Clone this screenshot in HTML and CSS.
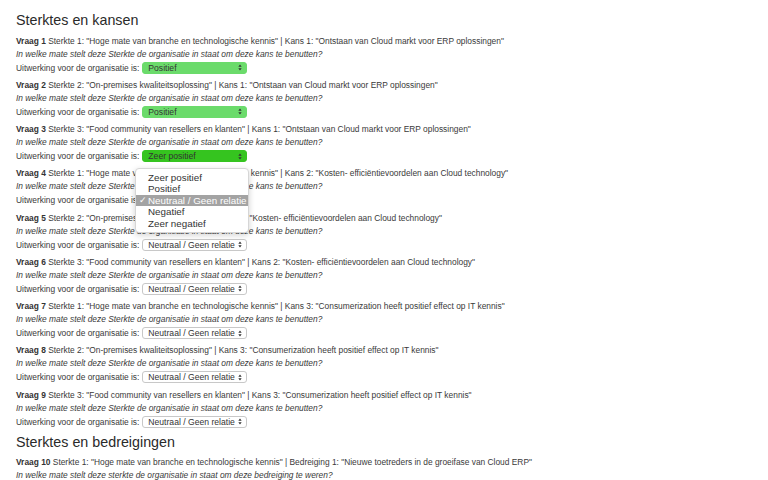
FILE: index.html
```html
<!DOCTYPE html>
<html lang="nl">
<head>
<meta charset="utf-8">
<title>Sterktes en kansen</title>
<link rel="stylesheet" href="styles.css">
</head>
<body>
<div class="page">
  <h2 class="section-title">Sterktes en kansen</h2>

  <div class="vraag">
    <div class="line"><b>Vraag 1</b> Sterkte 1: "Hoge mate van branche en technologische kennis" | Kans 1: "Ontstaan van Cloud markt voor ERP oplossingen"</div>
    <div class="line q">In welke mate stelt deze Sterkte de organisatie in staat om deze kans te benutten?</div>
    <div class="row"><span>Uitwerking voor de organisatie is:</span><div class="sel pos"><span>Positief</span><svg class="arr" viewBox="0 0 6 10"><path d="M3 0.5L5.5 4H0.5Z M3 9.5L5.5 6H0.5Z"/></svg></div></div>
  </div>

  <div class="vraag">
    <div class="line"><b>Vraag 2</b> Sterkte 2: "On-premises kwaliteitsoplossing" | Kans 1: "Ontstaan van Cloud markt voor ERP oplossingen"</div>
    <div class="line q">In welke mate stelt deze Sterkte de organisatie in staat om deze kans te benutten?</div>
    <div class="row"><span>Uitwerking voor de organisatie is:</span><div class="sel pos"><span>Positief</span><svg class="arr" viewBox="0 0 6 10"><path d="M3 0.5L5.5 4H0.5Z M3 9.5L5.5 6H0.5Z"/></svg></div></div>
  </div>

  <div class="vraag">
    <div class="line"><b>Vraag 3</b> Sterkte 3: "Food community van resellers en klanten" | Kans 1: "Ontstaan van Cloud markt voor ERP oplossingen"</div>
    <div class="line q">In welke mate stelt deze Sterkte de organisatie in staat om deze kans te benutten?</div>
    <div class="row"><span>Uitwerking voor de organisatie is:</span><div class="sel zpos"><span>Zeer positief</span><svg class="arr" viewBox="0 0 6 10"><path d="M3 0.5L5.5 4H0.5Z M3 9.5L5.5 6H0.5Z"/></svg></div></div>
  </div>

  <div class="vraag open">
    <div class="line"><b>Vraag 4</b> Sterkte 1: "Hoge mate van branche en technologische kennis" | Kans 2: "Kosten- efficiëntievoordelen aan Cloud technology"</div>
    <div class="line q">In welke mate stelt deze Sterkte de organisatie in staat om deze kans te benutten?</div>
    <div class="row"><span>Uitwerking voor de organisatie is:</span><div class="sel"><span>Neutraal / Geen relatie</span><svg class="arr" viewBox="0 0 6 10"><path d="M3 0.5L5.5 4H0.5Z M3 9.5L5.5 6H0.5Z"/></svg></div></div>
    <ul class="menu">
      <li>Zeer positief</li>
      <li>Positief</li>
      <li class="checked"><span class="check">✓</span>Neutraal / Geen relatie</li>
      <li>Negatief</li>
      <li>Zeer negatief</li>
    </ul>
  </div>

  <div class="vraag">
    <div class="line"><b>Vraag 5</b> Sterkte 2: "On-premises kwaliteitsoplossing" | Kans 2: "Kosten- efficiëntievoordelen aan Cloud technology"</div>
    <div class="line q">In welke mate stelt deze Sterkte de organisatie in staat om deze kans te benutten?</div>
    <div class="row"><span>Uitwerking voor de organisatie is:</span><div class="sel"><span>Neutraal / Geen relatie</span><svg class="arr" viewBox="0 0 6 10"><path d="M3 0.5L5.5 4H0.5Z M3 9.5L5.5 6H0.5Z"/></svg></div></div>
  </div>

  <div class="vraag">
    <div class="line"><b>Vraag 6</b> Sterkte 3: "Food community van resellers en klanten" | Kans 2: "Kosten- efficiëntievoordelen aan Cloud technology"</div>
    <div class="line q">In welke mate stelt deze Sterkte de organisatie in staat om deze kans te benutten?</div>
    <div class="row"><span>Uitwerking voor de organisatie is:</span><div class="sel"><span>Neutraal / Geen relatie</span><svg class="arr" viewBox="0 0 6 10"><path d="M3 0.5L5.5 4H0.5Z M3 9.5L5.5 6H0.5Z"/></svg></div></div>
  </div>

  <div class="vraag">
    <div class="line"><b>Vraag 7</b> Sterkte 1: "Hoge mate van branche en technologische kennis" | Kans 3: "Consumerization heeft positief effect op IT kennis"</div>
    <div class="line q">In welke mate stelt deze Sterkte de organisatie in staat om deze kans te benutten?</div>
    <div class="row"><span>Uitwerking voor de organisatie is:</span><div class="sel"><span>Neutraal / Geen relatie</span><svg class="arr" viewBox="0 0 6 10"><path d="M3 0.5L5.5 4H0.5Z M3 9.5L5.5 6H0.5Z"/></svg></div></div>
  </div>

  <div class="vraag">
    <div class="line"><b>Vraag 8</b> Sterkte 2: "On-premises kwaliteitsoplossing" | Kans 3: "Consumerization heeft positief effect op IT kennis"</div>
    <div class="line q">In welke mate stelt deze Sterkte de organisatie in staat om deze kans te benutten?</div>
    <div class="row"><span>Uitwerking voor de organisatie is:</span><div class="sel"><span>Neutraal / Geen relatie</span><svg class="arr" viewBox="0 0 6 10"><path d="M3 0.5L5.5 4H0.5Z M3 9.5L5.5 6H0.5Z"/></svg></div></div>
  </div>

  <div class="vraag">
    <div class="line"><b>Vraag 9</b> Sterkte 3: "Food community van resellers en klanten" | Kans 3: "Consumerization heeft positief effect op IT kennis"</div>
    <div class="line q">In welke mate stelt deze Sterkte de organisatie in staat om deze kans te benutten?</div>
    <div class="row"><span>Uitwerking voor de organisatie is:</span><div class="sel"><span>Neutraal / Geen relatie</span><svg class="arr" viewBox="0 0 6 10"><path d="M3 0.5L5.5 4H0.5Z M3 9.5L5.5 6H0.5Z"/></svg></div></div>
  </div>

  <h2 class="section-title">Sterktes en bedreigingen</h2>

  <div class="vraag">
    <div class="line"><b>Vraag 10</b> Sterkte 1: "Hoge mate van branche en technologische kennis" | Bedreiging 1: "Nieuwe toetreders in de groeifase van Cloud ERP"</div>
    <div class="line q">In welke mate stelt deze sterkte de organisatie in staat om deze bedreiging te weren?</div>
    <div class="row"><span>Uitwerking voor de organisatie is:</span><div class="sel"><span>Neutraal / Geen relatie</span><svg class="arr" viewBox="0 0 6 10"><path d="M3 0.5L5.5 4H0.5Z M3 9.5L5.5 6H0.5Z"/></svg></div></div>
  </div>
</div>
</body>
</html>
```

FILE: styles.css
```css
html, body {
  margin: 0;
  padding: 0;
  background: #ffffff;
  overflow: hidden;
}

body {
  font-family: "Liberation Sans", Arial, Helvetica, sans-serif;
  color: #3a3a3a;
  font-size: 8.4px;
}

.page {
  padding: 11px 16px 0 16px;
}

.section-title {
  margin: 0 0 5.5px 0;
  font-size: 14.3px;
  font-weight: normal;
  line-height: 18px;
  color: #2a2a2a;
}

.vraag {
  position: relative;
  margin-bottom: 4.25px;
}

.line {
  line-height: 13px;
  white-space: nowrap;
}

.line b {
  font-weight: bold;
  color: #333;
}

.q {
  font-style: italic;
}

.row {
  display: flex;
  align-items: center;
  height: 14px;
  white-space: nowrap;
}

.sel {
  box-sizing: border-box;
  margin-left: 3px;
  width: 105px;
  height: 12px;
  border: 1px solid #c8c8c8;
  border-radius: 3px;
  background: #ffffff;
  display: flex;
  align-items: center;
  justify-content: space-between;
  padding: 0 4px 0 5px;
  font-size: 8.6px;
  color: #333;
}

.sel.pos {
  background: #6bdb6b;
  border-color: #6bdb6b;
}

.sel.zpos {
  background: #35c41f;
  border-color: #35c41f;
}

.arr {
  width: 4px;
  height: 7px;
  fill: #333;
}

.menu {
  position: absolute;
  z-index: 10;
  left: 119px;
  top: 1px;
  width: 114px;
  margin: 0;
  padding: 2.5px 0 3px 0;
  list-style: none;
  background: #ffffff;
  border: 1px solid #d6d6d6;
  border-radius: 4px;
  box-shadow: 0 2px 6px rgba(0, 0, 0, 0.18);
  box-sizing: border-box;
  font-size: 9.8px;
  color: #333;
}

.menu li {
  position: relative;
  height: 11.5px;
  line-height: 11.5px;
  padding-left: 12px;
  white-space: nowrap;
}

.menu li.checked {
  background: #a3a3a3;
  color: #ffffff;
}

.check {
  position: absolute;
  left: 3px;
  top: 0;
  font-size: 9px;
}
```
